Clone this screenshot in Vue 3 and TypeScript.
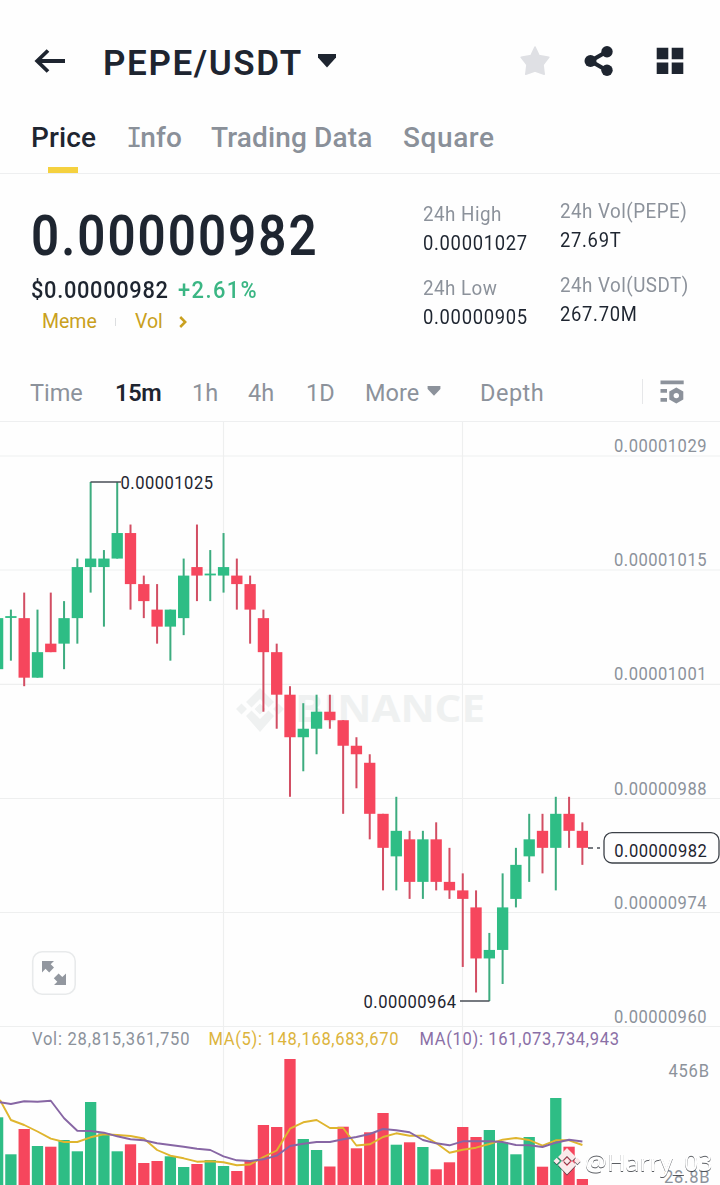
<script setup lang="ts">
type Candle = [open: number, close: number, high: number, low: number, volumeTop: number]

// Prices are in units of 0.00000001; volumeTop is the top edge of the volume bar.
const raw: Candle[] = [
  [1003, 1009, 1009, 1003, 1117.3],
  [1009, 1009, 1010, 1004, 1154.3],
  [1009, 1002, 1012, 1001, 1129],
  [1002, 1005, 1010, 1002, 1146],
  [1006, 1005, 1012, 1005, 1146.7],
  [1006, 1009, 1011, 1003, 1140],
  [1009, 1015, 1016, 1006, 1151.3],
  [1015, 1016, 1025, 1012, 1102],
  [1015, 1016, 1017, 1008, 1133.3],
  [1016, 1019, 1025, 1016, 1151.3],
  [1019, 1013, 1020, 1010, 1144.3],
  [1013, 1011, 1014, 1009, 1163],
  [1010, 1008, 1013, 1006, 1161],
  [1008, 1010, 1010, 1004, 1156.3],
  [1009, 1014, 1016, 1007, 1167],
  [1015, 1014, 1020, 1011, 1164],
  [1014, 1014, 1017, 1011, 1160],
  [1014, 1015, 1019, 1012, 1166],
  [1014, 1013, 1016, 1010, 1171],
  [1013, 1010, 1014, 1006, 1160.7],
  [1009, 1005, 1010, 998, 1125],
  [1005, 1000, 1006, 996, 1127],
  [1000, 995, 1001, 988, 1059],
  [995, 996, 999, 991, 1139],
  [996, 998, 1000, 993, 1150],
  [998, 997, 1000, 996, 1166.5],
  [997, 994, 997, 986, 1126.7],
  [994, 993, 995, 989, 1148.3],
  [992, 986, 993, 983, 1132.3],
  [986, 982, 986, 977, 1113],
  [981, 984, 988, 977, 1144.7],
  [983, 978, 984, 976, 1142.3],
  [978, 983, 984, 976, 1147],
  [983, 978, 985, 977, 1169.3],
  [978, 977, 982, 976, 1162.3],
  [977, 976, 979, 968, 1127],
  [975, 969, 977, 965, 1137],
  [969, 970, 972, 964, 1130],
  [970, 975, 979, 966, 1142.3],
  [976, 980, 982, 975, 1154.3],
  [981, 983, 986, 978, 1137],
  [984, 982, 986, 979, 1166.7],
  [982, 986, 988, 977, 1098],
  [986, 984, 988, 982, 1146.7],
  [984, 982, 985, 980, 1179],
]

const xAt = (i: number): number => 10.9 + (i - 1) * 13.29
const yAt = (p: number): number => 482 + (1025 - p) * 8.508

const candles = raw.map(([open, close, high, low, vol], i) => {
  const top = Math.max(open, close)
  const flat = open === close
  return {
    x: xAt(i),
    up: close >= open,
    wickTop: yAt(high),
    wickHeight: yAt(low) - yAt(high),
    bodyTop: flat ? yAt(top) - 2 : yAt(top),
    bodyHeight: flat ? 1.8 : Math.abs(open - close) * 8.508,
    vol,
  }
})

const ma5 = [1100, 1120, 1125, 1131.5, 1138.7, 1142, 1142, 1137.3, 1134.3, 1135, 1136, 1138.5, 1150, 1155.7, 1158.3, 1161.7, 1161.3, 1162.3, 1165.3, 1164.5, 1157, 1150.5, 1128.7, 1122.3, 1120, 1128, 1128, 1145.5, 1144.3, 1137, 1133.3, 1135.7, 1135.7, 1143, 1152.7, 1149.7, 1147.7, 1144, 1139.7, 1138, 1140, 1145.7, 1140.3, 1140.3, 1145]
const ma10 = [1102.3, 1104, 1101.3, 1101.7, 1100.7, 1118.3, 1130.7, 1131, 1132.7, 1136.3, 1139.3, 1140.3, 1143.3, 1145, 1146.7, 1148.7, 1150, 1156.3, 1160.3, 1161, 1159.3, 1155.7, 1146, 1143.7, 1142, 1142, 1139.3, 1137, 1134, 1129, 1130.3, 1132.3, 1140, 1143.3, 1145.3, 1141.3, 1141.3, 1141.3, 1142, 1145, 1145.3, 1147, 1142.7, 1139.7, 1141.5]
// The series starts one slot left of the first full candle, clipped at the edge.
const toLine = (values: number[]): string =>
  values.map((v, i) => `${i === 0 ? 0 : xAt(i).toFixed(1)},${v}`).join(' ')

interface Label {
  text: string
  x: number
  y: number
  width: number
  kind: string
}

const CONDENSE = 0.92
const labels: Label[] = [
  { text: '0.00001029', x: 614, y: 452, width: 92.5, kind: 'axis' },
  { text: '0.00001015', x: 614, y: 566, width: 92.5, kind: 'axis' },
  { text: '0.00001001', x: 614, y: 680, width: 92.5, kind: 'axis' },
  { text: '0.00000988', x: 614, y: 795, width: 92.5, kind: 'axis' },
  { text: '0.00000974', x: 614, y: 909, width: 92.5, kind: 'axis' },
  { text: '0.00000960', x: 614, y: 1023, width: 92.5, kind: 'axis' },
  { text: '0.00001025', x: 120.5, y: 489, width: 92.5, kind: 'mark' },
  { text: '0.00000964', x: 363.5, y: 1008, width: 92.5, kind: 'mark' },
  { text: '0.00000982', x: 614.3, y: 857, width: 92.5, kind: 'mark' },
  { text: 'Vol: 28,815,361,750', x: 32, y: 1045.3, width: 157.5, kind: 'axis' },
  { text: 'MA(5): 148,168,683,670', x: 208.5, y: 1045.3, width: 190, kind: 'label5' },
  { text: 'MA(10): 161,073,734,943', x: 419.5, y: 1045.3, width: 199.5, kind: 'label10' },
  { text: '456B', x: 668.5, y: 1077.3, width: 40.5, kind: 'axis' },
  { text: '28.8B', x: 664, y: 1183.3, width: 45.5, kind: 'axis' },
]
const gridRows = [456, 570, 684.3, 798.5, 912.5, 1026.5]
const gridCols = [223.5, 462.5]
</script>

<template>
  <main class="screen">
    <header class="topbar">
      <svg class="back" viewBox="0 0 32 26" width="32" height="26">
        <path d="M31 13H3M14 2.5L3.2 13L14 23.5" fill="none" stroke="#1e2530" stroke-width="3.8" />
      </svg>
      <h1 class="pair">PEPE/USDT</h1>
      <svg class="caret" viewBox="0 0 20 16" width="20" height="16">
        <path d="M1 1H19V4.5L10 14.5L1 4.5Z" fill="#1e2530" />
      </svg>
      <svg class="star" viewBox="0 0 30 30" width="30" height="30">
        <path d="M15 1L19 9.6L28.8 11.3L23 18.7L24.2 28.3L15 25L5.8 28.3L7 18.7L1.2 11.3L11 9.6Z" fill="#dfe0e4" stroke="#dfe0e4" stroke-width="1.6" stroke-linejoin="round" />
      </svg>
      <svg class="share" viewBox="0 0 30 32" width="30" height="32">
        <path d="M23 6.5L6.5 16L23 25.5" fill="none" stroke="#1e2530" stroke-width="4.2" />
        <circle cx="23" cy="6.7" r="5.7" fill="#1e2530" />
        <circle cx="6.5" cy="16" r="6" fill="#1e2530" />
        <circle cx="23" cy="25.3" r="5.7" fill="#1e2530" />
      </svg>
      <svg class="apps" viewBox="0 0 28 28" width="28" height="28">
        <path d="M.7 .7h11.6v11.6H.7zM15.7 .7h11.6v11.6H15.7zM.7 15.4h11.6V27H.7zM15.7 15.4h11.6V27H15.7z" fill="#1e2530" />
      </svg>
    </header>

    <nav class="tabs">
      <span class="tab active">Price</span>
      <span class="tab"><span class="serif-i">I</span>nfo</span>
      <span class="tab">Trading Data</span>
      <span class="tab square">Square</span>
    </nav>

    <section class="summary">
      <div class="quote">
        <div class="last">0.00000982</div>
        <div class="fiat">
          <span class="usd"><span class="condensed">$0.00000982</span></span>
          <span class="change condensed">+2.61%</span>
        </div>
        <div class="tags">
          <span class="meme">Meme</span><i class="sep"></i><span class="vol">Vol</span>
          <svg class="chev" viewBox="0 0 8 12" width="8" height="12">
            <path d="M1.2 1L6.2 6L1.2 11" fill="none" stroke="#c9a020" stroke-width="2.5" />
          </svg>
        </div>
      </div>
      <dl class="stats high-low">
        <dt>24h High</dt>
        <dd>0.00001027</dd>
        <dt>24h Low</dt>
        <dd>0.00000905</dd>
      </dl>
      <dl class="stats volumes">
        <dt>24h Vol(PEPE)</dt>
        <dd>27.69T</dd>
        <dt>24h Vol(USDT)</dt>
        <dd>267.70M</dd>
      </dl>
    </section>

    <nav class="intervals">
      <span>Time</span>
      <span class="selected">15m</span>
      <span>1h</span>
      <span>4h</span>
      <span>1D</span>
      <span class="more">More
        <svg viewBox="0 0 14 12" width="14" height="12"><path d="M.6 1H13.4V4L7 10.8L.6 4Z" fill="#8c929b" /></svg>
      </span>
      <span class="depth">Depth</span>
      <i class="rule"></i>
      <svg class="settings" viewBox="0 0 24 24" width="24" height="24">
        <path d="M.5 .5H23.7V4.2H.5zM.5 9H7v3.7H.5zM.5 18H7v3.7H.5z" fill="#8c929b" />
        <path fill-rule="evenodd" d="M16.3 7.6L23.3 11.6V19.6L16.3 23.6L9.3 19.6V11.6ZM16.3 12.9a2.7 2.7 0 1 0 0 5.4a2.7 2.7 0 1 0 0-5.4Z" fill="#8c929b" />
      </svg>
    </nav>

    <svg class="chart" viewBox="0 422 720 763" width="720" height="763">
      <g class="grid">
        <line v-for="y in gridRows" :key="'r' + y" x1="0" x2="720" :y1="y" :y2="y" />
        <line v-for="x in gridCols" :key="'c' + x" :x1="x" :x2="x" y1="422" y2="1185" />
      </g>

      <g class="brand">
        <path d="M246 702L260 688L274 702L268.5 707.5L260 699L251.5 707.5ZM246 716L251.5 710.5L260 719L268.5 710.5L274 716L260 732ZM236 709L241.5 703.5L247 709L241.5 714.5ZM273 709L278.5 703.5L284 709L278.5 714.5ZM254.5 709L260 703.5L265.5 709L260 714.5Z" />
        <text x="295" y="722" textLength="190" lengthAdjust="spacingAndGlyphs">BINANCE</text>
      </g>

      <g v-for="(c, i) in candles" :key="i" :class="c.up ? 'up' : 'down'">
        <rect class="wick" :x="c.x - 1" :y="c.wickTop" width="2" :height="c.wickHeight" />
        <rect :x="c.x - 5.65" :y="c.bodyTop" width="11.3" :height="c.bodyHeight" />
        <rect :x="c.x - 5.65" :y="c.vol" width="11.3" :height="1186 - c.vol" />
      </g>

      <polyline class="ma5" :points="toLine(ma5)" />
      <polyline class="ma10" :points="toLine(ma10)" />

      <path class="pointer" d="M90.5 482H121M460 1001H489.5" />
      <path class="pointer" d="M588 848H600" stroke-dasharray="5 4" />
      <rect class="current" x="604" y="832.7" width="115" height="30.3" rx="8" />
      <text
        v-for="l in labels"
        :key="l.text + l.y"
        :class="l.kind"
        :transform="`translate(${l.x} ${l.y}) scale(${CONDENSE} 1)`"
        :textLength="l.width / CONDENSE"
        lengthAdjust="spacing"
      >{{ l.text }}</text>

      <rect class="expand" x="32.7" y="951.7" width="42.5" height="42.5" rx="9.5" />
      <path d="M42 961H54L50.7 964.3L54 967.6L49.2 972.4L45.5 968.7L42 972.5ZM66 985H54L57.3 981.7L53.8 978.2L58.6 973.4L62.3 977.1L66 973.5Z" fill="#92979f" />

      <g class="credit">
        <path d="M558 1157L567 1148L576 1157L572 1161L567 1156L562 1161ZM558 1165L562 1161L567 1166L572 1161L576 1165L567 1174.5ZM553.5 1161L556.7 1157.8L559.9 1161L556.7 1164.2ZM574.2 1161L577.4 1157.8L580.6 1161L577.4 1164.2ZM563.8 1161L567 1157.8L570.2 1161L567 1164.2Z" />
        <text x="584.5" y="1171.3" textLength="128" lengthAdjust="spacingAndGlyphs">@Harry_03</text>
      </g>
    </svg>
  </main>
</template>

<style>
body {
  margin: 0;
  background: #fefefe;
}
</style>

<style scoped>
.screen {
  width: 720px;
  height: 1185px;
  overflow: hidden;
  background: #fefefe;
  color: #1e2530;
  font-family: Roboto, "Liberation Sans", sans-serif;
}
svg {
  display: block;
  flex: none;
}
.topbar {
  display: flex;
  align-items: center;
  height: 122px;
  padding-left: 34px;
}
.pair {
  margin: 0 0 0 37px;
  width: 213px;
  padding-top: 5px;
  font-size: 35px;
  line-height: 45px;
  font-weight: 600;
  letter-spacing: 1.6px;
  white-space: nowrap;
}
.caret {
  margin-left: 1px;
}
.star {
  margin-left: 183px;
}
.share {
  margin-left: 34px;
}
.apps {
  margin-left: 42px;
}
.tabs {
  display: grid;
  grid-template-columns: 95px 85px 192px 1fr;
  height: 51px;
  padding-left: 31px;
  border-bottom: 1px solid #eeeff0;
  font-size: 28px;
  line-height: 32px;
  font-weight: 480;
  letter-spacing: 0.15px;
  color: #8a9099;
  white-space: nowrap;
}
.tab {
  display: block;
  height: 32px;
}
.square {
  letter-spacing: 0.6px;
}
.active {
  color: #1e2530;
}
.active::after {
  content: "";
  display: block;
  width: 30px;
  height: 6px;
  margin: 13px 0 0 17px;
  background: #f5d13f;
}
.serif-i {
  font-family: "DejaVu Sans Mono", monospace;
  font-size: 27px;
  line-height: 1;
  letter-spacing: -2px;
}
.summary {
  display: grid;
  grid-template-columns: 392px 137px 1fr;
  height: 188px;
  padding-left: 31px;
  box-sizing: border-box;
  white-space: nowrap;
}
.quote {
  padding-top: 34px;
}
.last {
  font-size: 56px;
  line-height: 56px;
  font-weight: 600;
  letter-spacing: 2.3px;
  transform: scaleX(0.88);
  transform-origin: 0 0;
}
.fiat {
  display: flex;
  margin-top: 14px;
  font-size: 23px;
  line-height: 26px;
  font-weight: 500;
}
.condensed {
  display: inline-block;
  letter-spacing: 0.7px;
  transform: scaleX(0.95);
  transform-origin: 0 0;
}
.usd {
  width: 147px;
}
.change {
  color: #3bb684;
  letter-spacing: 1.5px;
}
.tags {
  display: flex;
  align-items: center;
  margin-top: 7px;
  padding-left: 11px;
  font-size: 19.5px;
  line-height: 22px;
  color: #c9a020;
}
.meme {
  width: 73px;
}
.sep {
  width: 1px;
  height: 8px;
  margin-right: 19px;
  background: #dcdee0;
}
.vol {
  width: 44px;
}
.stats {
  margin: 0;
  padding-top: 26px;
  font-size: 20px;
  line-height: 29px;
}
.stats dt {
  color: #8c929b;
  letter-spacing: 0.5px;
  transform: scaleX(0.94);
  transform-origin: 0 0;
}
.stats dd {
  margin: 0 0 16px;
  letter-spacing: 0.75px;
  transform: scaleX(0.92);
  transform-origin: 0 0;
}
.volumes {
  padding-top: 23px;
}
.intervals {
  display: grid;
  grid-template-columns: 85px 77px 56px 58px 59px 115px 162px 18px 24px;
  align-items: center;
  height: 60px;
  padding-left: 30px;
  box-sizing: border-box;
  border-bottom: 1px solid #eeeff0;
  font-size: 23.5px;
  line-height: 28px;
  color: #8c929b;
  white-space: nowrap;
}
.intervals > span {
  padding-top: 2px;
}
.intervals > .selected {
  color: #1e2530;
  font-weight: 600;
  letter-spacing: -0.3px;
}
.depth {
  letter-spacing: 0.5px;
}
.more {
  display: flex;
  align-items: center;
  gap: 8px;
}
.more svg {
  margin-top: -3px;
}
.rule {
  width: 1px;
  height: 25px;
  background: #e6e7e9;
}
.grid line {
  stroke: #eeefef;
  stroke-width: 1.2;
}
.up {
  fill: #2ebd85;
}
.down {
  fill: #f6465d;
}
.up .wick {
  fill: #3dac7f;
}
.down .wick {
  fill: #d24e63;
}
.ma5,
.ma10 {
  fill: none;
  stroke-width: 1.9;
  stroke-linejoin: round;
}
.ma5 {
  stroke: #dfb52e;
}
.ma10 {
  stroke: #8766a4;
}
.pointer {
  fill: none;
  stroke: #4a4f57;
  stroke-width: 1.4;
}
.chart text {
  font-size: 18px;
}
.mark {
  fill: #1e2530;
}
.axis {
  fill: #8c929b;
}
.label5 {
  fill: #dcb43c;
}
.label10 {
  fill: #8a6fa6;
}
.current {
  fill: #fefefe;
  stroke: #3c4148;
  stroke-width: 1.3;
}
.expand {
  fill: #fefefe;
  stroke: #e8eaeb;
  stroke-width: 1.6;
}
.brand {
  fill: #eff1f1;
}
.chart .brand text {
  font: 700 38px "Open Sans", sans-serif;
}
.credit {
  fill: #fff;
  filter: drop-shadow(0.8px 1px 0.5px rgba(50, 54, 60, 0.8));
}
.credit path {
  fill: #fbe9ea;
}
.chart .credit text {
  font: 400 24px "Noto Sans", sans-serif;
}
</style>
